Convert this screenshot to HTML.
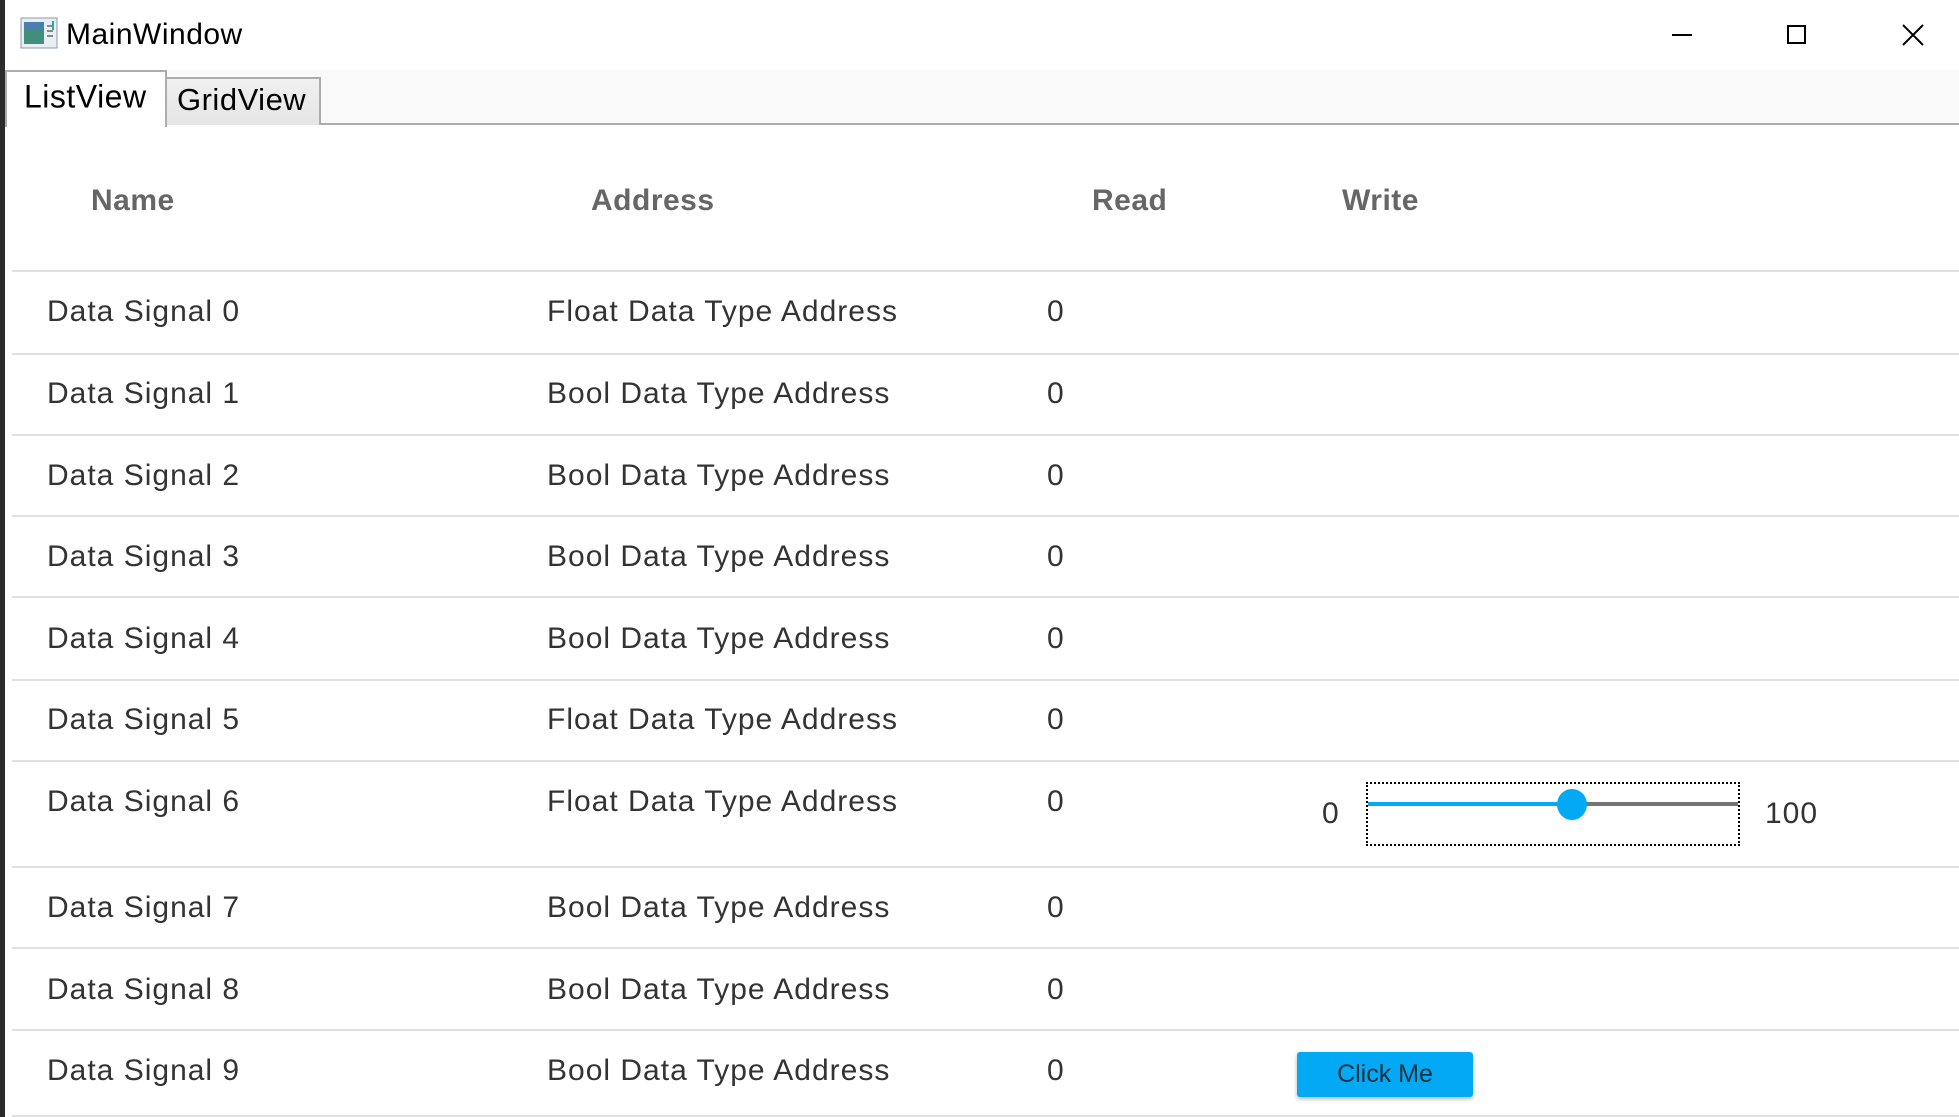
<!DOCTYPE html>
<html><head><meta charset="utf-8"><style>
*{margin:0;padding:0;box-sizing:border-box}
body{width:1959px;height:1117px;overflow:hidden;background:#fff;font-family:"Liberation Sans",sans-serif;position:relative}
.a{position:absolute;white-space:nowrap}
.t{font-size:30px;color:#333;transform:translateY(-50%);letter-spacing:1px}
.h{font-size:30px;color:#666;font-weight:bold;transform:translateY(-50%);letter-spacing:0.5px}
.line{position:absolute;left:12px;right:0;height:2px;background:#e0e0e0}
</style></head><body>
<div class="a" style="left:0;top:0;width:5px;height:1117px;background:#2b2b2b"></div>
<svg class="a" style="left:20px;top:17px" width="38" height="32" viewBox="0 0 38 32"><rect x="1" y="1" width="36" height="30" fill="#e8eef4" stroke="#8a9aa8"/><rect x="4" y="5" width="20" height="22" fill="#3f8f7a"/><rect x="4" y="5" width="20" height="8" fill="#4a7fb0"/><rect x="27" y="8" width="6" height="2" fill="#888"/><rect x="27" y="13" width="6" height="2" fill="#888"/><rect x="27" y="18" width="6" height="2" fill="#888"/><rect x="32" y="4" width="2" height="9" fill="#2aa"/></svg>
<div class="a" style="left:66px;top:35px;font-size:30px;letter-spacing:0.5px;color:#000;transform:translateY(-50%)">MainWindow</div>
<div class="a" style="left:1672px;top:34px;width:20px;height:2px;background:#000"></div>
<div class="a" style="left:1787px;top:25px;width:19px;height:19px;border:2px solid #000"></div>
<svg class="a" style="left:1902px;top:24px" width="22" height="22"><path d="M1 1L21 21M21 1L1 21" stroke="#000" stroke-width="2"/></svg>
<div class="a" style="left:5px;top:70px;width:1954px;height:55px;background:#f9f9f9;border-bottom:2px solid #acacac"></div>
<div class="a" style="left:165px;top:77px;width:156px;height:48px;background:linear-gradient(#f0f0f0,#e5e5e5);border:2px solid #acacac;border-bottom:none"></div>
<div class="a" style="left:177px;top:100px;font-size:31px;letter-spacing:0.5px;color:#000;transform:translateY(-50%)">GridView</div>
<div class="a" style="left:5px;top:70px;width:162px;height:57px;background:#fff;border:2px solid #acacac;border-bottom:none"></div>
<div class="a" style="left:24px;top:97px;font-size:32px;letter-spacing:0.5px;color:#000;transform:translateY(-50%)">ListView</div>
<div class="a h" style="left:91px;top:201px">Name</div>
<div class="a h" style="left:591px;top:201px">Address</div>
<div class="a h" style="left:1092px;top:201px">Read</div>
<div class="a h" style="left:1342px;top:201px">Write</div>
<div class="line" style="top:270px"></div>
<div class="line" style="top:353px"></div>
<div class="line" style="top:434px"></div>
<div class="line" style="top:515px"></div>
<div class="line" style="top:596px"></div>
<div class="line" style="top:679px"></div>
<div class="line" style="top:760px"></div>
<div class="line" style="top:866px"></div>
<div class="line" style="top:947px"></div>
<div class="line" style="top:1029px"></div>
<div class="line" style="top:1115px"></div>
<div class="a t" style="left:47px;top:312px">Data Signal 0</div><div class="a t" style="left:547px;top:312px">Float Data Type Address</div><div class="a t" style="left:1047px;top:312px">0</div>
<div class="a t" style="left:47px;top:394px">Data Signal 1</div><div class="a t" style="left:547px;top:394px">Bool Data Type Address</div><div class="a t" style="left:1047px;top:394px">0</div>
<div class="a t" style="left:47px;top:476px">Data Signal 2</div><div class="a t" style="left:547px;top:476px">Bool Data Type Address</div><div class="a t" style="left:1047px;top:476px">0</div>
<div class="a t" style="left:47px;top:557px">Data Signal 3</div><div class="a t" style="left:547px;top:557px">Bool Data Type Address</div><div class="a t" style="left:1047px;top:557px">0</div>
<div class="a t" style="left:47px;top:639px">Data Signal 4</div><div class="a t" style="left:547px;top:639px">Bool Data Type Address</div><div class="a t" style="left:1047px;top:639px">0</div>
<div class="a t" style="left:47px;top:720px">Data Signal 5</div><div class="a t" style="left:547px;top:720px">Float Data Type Address</div><div class="a t" style="left:1047px;top:720px">0</div>
<div class="a t" style="left:47px;top:802px">Data Signal 6</div><div class="a t" style="left:547px;top:802px">Float Data Type Address</div><div class="a t" style="left:1047px;top:802px">0</div>
<div class="a t" style="left:47px;top:908px">Data Signal 7</div><div class="a t" style="left:547px;top:908px">Bool Data Type Address</div><div class="a t" style="left:1047px;top:908px">0</div>
<div class="a t" style="left:47px;top:990px">Data Signal 8</div><div class="a t" style="left:547px;top:990px">Bool Data Type Address</div><div class="a t" style="left:1047px;top:990px">0</div>
<div class="a t" style="left:47px;top:1071px">Data Signal 9</div><div class="a t" style="left:547px;top:1071px">Bool Data Type Address</div><div class="a t" style="left:1047px;top:1071px">0</div>
<div class="a t" style="left:1322px;top:814px">0</div>
<div class="a t" style="left:1765px;top:814px">100</div>
<div class="a" style="left:1366px;top:782px;width:374px;height:64px;border:2px dotted #000"></div>
<div class="a" style="left:1368px;top:802px;width:204px;height:4px;background:#03a9f4"></div>
<div class="a" style="left:1572px;top:802px;width:166px;height:4px;background:#757575"></div>
<div class="a" style="left:1557px;top:789px;width:30px;height:31px;border-radius:50%;background:#03a9f4"></div>
<div class="a" style="left:1297px;top:1052px;width:176px;height:45px;background:#03a9f4;border-radius:3px;box-shadow:0 2px 4px rgba(0,0,0,.3);font-size:25px;color:#12303d;text-align:center;line-height:45px">Click Me</div>
</body></html>
